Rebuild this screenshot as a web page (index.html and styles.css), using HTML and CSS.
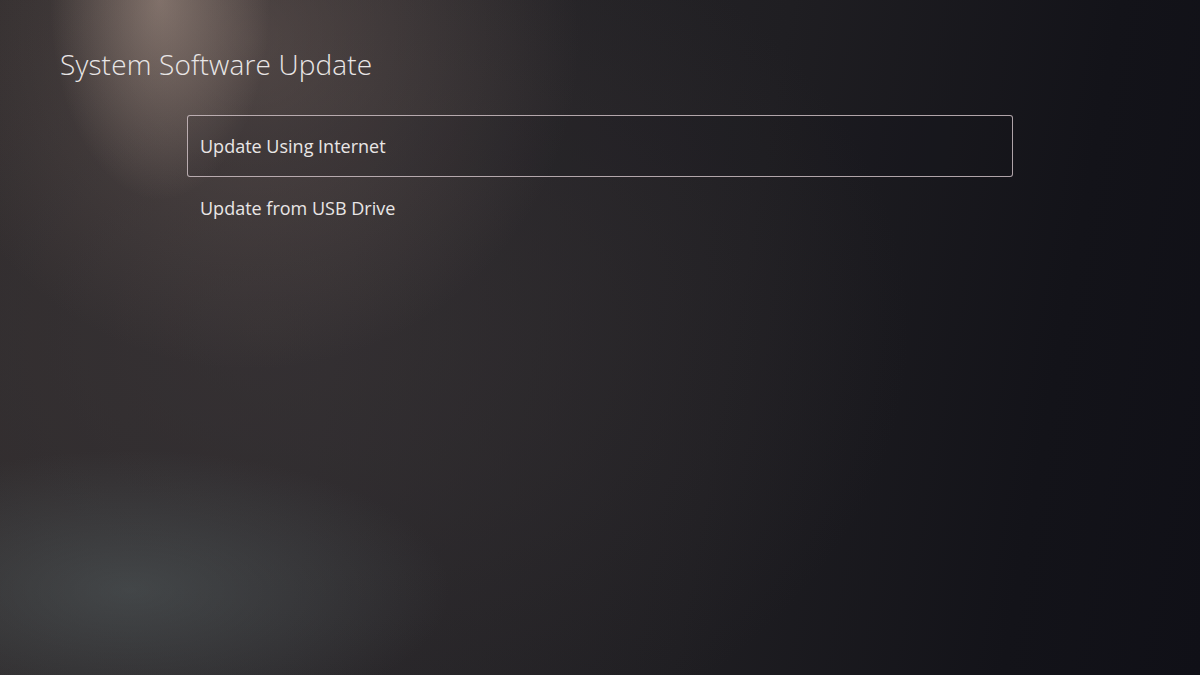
FILE: index.html
```html
<!DOCTYPE html>
<html lang="en">
<head>
    <meta charset="UTF-8">
    <meta name="viewport" content="width=device-width, initial-scale=1.0">
    <title>System Software Update</title>
    <link rel="stylesheet" href="styles.css">
</head>
<body>
    <div class="screen">
        <h1 class="title">System Software Update</h1>
        <ul class="menu">
            <li class="menu-item selected">Update Using Internet</li>
            <li class="menu-item">Update from USB Drive</li>
        </ul>
    </div>
</body>
</html>
```

FILE: styles.css
```css
html, body {
    margin: 0;
    padding: 0;
    height: 100%;
}
body {
    font-family: 'Open Sans', 'Noto Sans', sans-serif;
    color: #e9e6e6;
    overflow: hidden;
    background:
        radial-gradient(ellipse 110px 200px at 160px 0px, rgba(200, 175, 160, 0.45), rgba(200, 175, 160, 0) 100%),
        radial-gradient(ellipse 330px 330px at 250px 40px, rgba(140, 118, 110, 0.35), rgba(140, 118, 110, 0) 100%),
        radial-gradient(ellipse 320px 140px at 130px 590px, rgba(90, 102, 104, 0.45), rgba(90, 102, 104, 0) 100%),
        radial-gradient(ellipse 650px 480px at 260px 330px, rgba(62, 56, 58, 0.55), rgba(62, 56, 58, 0) 100%),
        linear-gradient(100deg, #2f2b2c 0%, #29272a 30%, #1f1e22 60%, #131319 85%, #101017 100%);
}
.screen {
    height: 100%;
    box-sizing: border-box;
    padding: 45px 0 0 60px;
}
.title {
    margin: 0;
    font-size: 28px;
    font-weight: 300;
    letter-spacing: 0.15px;
}
.menu {
    list-style: none;
    margin: 32px 0 0 127px;
    padding: 0;
    width: 826px;
}
.menu-item {
    height: 62px;
    box-sizing: border-box;
    padding: 0 12px;
    display: flex;
    align-items: center;
    font-size: 18px;
    font-weight: 400;
    border: 1.5px solid transparent;
    border-radius: 3px;
}
.menu-item.selected {
    border-color: rgba(215, 200, 205, 0.8);
    background: rgba(20, 18, 22, 0.12);
}
```
